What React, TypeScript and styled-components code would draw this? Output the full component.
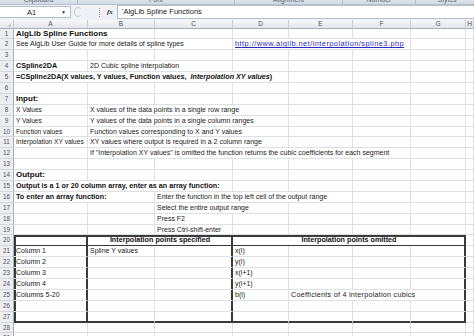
import React from 'react';
import styled, { createGlobalStyle, css } from 'styled-components';

const GlobalStyle = createGlobalStyle`
  html, body { margin: 0; padding: 0; background: #fff; }
  body { font-family: 'Liberation Sans', Arial, sans-serif; overflow: hidden; }
`;

const LETTERS = ['A', 'B', 'C', 'D', 'E', 'F', 'G', 'H'];
const DARK = '#3a3a3a';

type Kind = 'body' | 'label' | 'title' | 'bold' | 'head' | 'link' | 'wide';
type CellDef = { t?: React.ReactNode; s?: number; k?: Kind; a?: 'center'; e?: string };

const Window = styled.div`
  width: 474px;
  height: 336px;
  overflow: hidden;
  display: flex;
  flex-direction: column;
`;

const RibbonEdge = styled.div`
  height: 4px;
  display: flex;
  overflow: hidden;
  background: linear-gradient(#dde4ec, #d2d9e2);
  border-bottom: 1px solid #b7c2cf;
`;

const RibbonGroup = styled.div<{ $w: number }>`
  width: ${(p) => p.$w}px;
  flex: none;
  border-right: 1px solid #aebaca;
  font-size: 7px;
  color: #56606c;
  text-align: center;
  line-height: 7px;
  margin-top: -4px;
`;

const FormulaBar = styled.div`
  height: 15px;
  display: flex;
  align-items: center;
  background: #eef1f5;
`;

const NameBox = styled.div`
  width: 71px;
  height: 12px;
  flex: none;
  display: flex;
  align-items: center;
  background: #fff;
  border: 1px solid #b4bfcc;
  border-left: none;
  font-size: 7.5px;
  color: #222;
  padding-left: 27px;
  box-sizing: border-box;
`;

const NameArrow = styled.span`
  margin-left: auto;
  margin-right: 4px;
  font-size: 5px;
  color: #333;
`;

const FxArea = styled.div`
  width: 46px;
  flex: none;
  display: flex;
  align-items: center;
  height: 14px;
`;

const CancelMark = styled.span`
  margin-left: 3px;
  width: 6px;
  height: 8px;
  border: 1px solid #c9ced6;
  border-radius: 50%;
  border-right-color: transparent;
`;

const Dots = styled.span`
  margin-left: 17px;
  height: 9px;
  border-left: 1px dotted #9aa4b0;
`;

const FxLabel = styled.span`
  margin-left: 7px;
  font-family: 'Liberation Serif', serif;
  font-style: italic;
  font-weight: bold;
  font-size: 7px;
  color: #333;
`;

const FormulaInput = styled.div`
  flex: 1;
  height: 12px;
  background: #fff;
  border: 1px solid #b4bfcc;
  border-right: none;
  font-size: 7.5px;
  line-height: 12px;
  color: #222;
  padding-left: 4px;
`;

const Sheet = styled.div`
  display: grid;
  grid-template-columns: 14px 74px 67px 78px 56px 64px 58px 55px 1fr;
  grid-template-rows: 9px;
  grid-auto-rows: 10.9px;
  overflow: hidden;
`;

const HeaderCell = styled.div<{ $corner?: boolean }>`
  background: linear-gradient(#f7f8fa, #e2e5e9);
  border-right: 1px solid #c7ccd2;
  border-bottom: 1px solid #a9b0b9;
  font-size: 6.5px;
  line-height: 8px;
  color: #4a4f55;
  text-align: center;
  position: relative;
  ${(p) =>
    p.$corner &&
    css`
      &::after {
        content: '';
        position: absolute;
        right: 2px;
        bottom: 1px;
        border-left: 4px solid transparent;
        border-bottom: 4px solid #c3c8ce;
      }
    `}
`;

const RowHead = styled.div`
  background: #eceef1;
  border-right: 1px solid #a9b0b9;
  border-bottom: 1px solid #d3d7dc;
  font-size: 6.3px;
  line-height: 10px;
  color: #50555c;
  text-align: center;
`;

const edgeStyle = (e = '') => {
  const shadows: string[] = [];
  if (e.includes('t')) shadows.push(`inset 0 2px 0 ${DARK}`);
  if (e.includes('l')) shadows.push(`inset 2px 0 0 ${DARK}`);
  if (e.includes('r')) shadows.push(`inset -1px 0 0 ${DARK}`);
  if (e.includes('B')) shadows.push(`inset 0 -1px 0 ${DARK}`);
  return css`
    ${e.includes('r') && `border-right-color: ${DARK};`}
    ${(e.includes('b') || e.includes('B')) && `border-bottom-color: ${DARK};`}
    ${shadows.length > 0 && `box-shadow: ${shadows.join(', ')};`}
  `;
};

const kindStyle = {
  body: css`
    font-size: 7px;
    color: #222;
  `,
  label: css`
    font-size: 6.6px;
    color: #222;
  `,
  wide: css`
    font-size: 7.2px;
    letter-spacing: 0.25px;
    color: #222;
  `,
  title: css`
    font-size: 8px;
    font-weight: bold;
    color: #111;
  `,
  bold: css`
    font-size: 7.2px;
    font-weight: bold;
    color: #111;
  `,
  head: css`
    font-size: 8px;
    font-weight: bold;
    color: #111;
  `,
  link: css`
    font-size: 7.4px;
    letter-spacing: 0.45px;
    color: #2a2ac0;
    text-decoration: underline;
  `,
};

const Cell = styled.div<{ $span: number; $kind: Kind; $align?: string; $edge?: string }>`
  grid-column: span ${(p) => p.$span};
  border-right: 1px solid #dde0e4;
  border-bottom: 1px solid #dde0e4;
  white-space: nowrap;
  line-height: 10.5px;
  padding: 0 2px;
  overflow: visible;
  text-align: ${(p) => p.$align || 'left'};
  ${(p) => kindStyle[p.$kind]}
  ${(p) => edgeStyle(p.$edge)}
`;

const tableRow = (a = '', b = '', d = '', e = '', last = false): CellDef[] => {
  const B = last ? 'B' : '';
  const tail: CellDef[] = e
    ? [{ t: e, s: 3, k: 'wide', e: 'r' + B }]
    : [{ e: B }, { e: B }, { e: 'r' + B }];
  return [{ t: a, e: 'lr' + B }, { t: b, e: B }, { e: 'r' + B }, { t: d, e: B }, ...tail];
};

const rows: CellDef[][] = [
  [{ t: 'AlgLib Spline Functions', s: 2, k: 'title' }],
  [
    { t: 'See AlgLib User Guide for more details of spline types', s: 3 },
    { t: 'http://www.alglib.net/interpolation/spline3.php', s: 3, k: 'link' },
  ],
  [],
  [{ t: 'CSpline2DA', k: 'bold' }, { t: '2D Cubic spline interpolation', s: 2 }],
  [
    {
      t: (
        <>
          =CSpline2DA(X values, Y values, Function values,&nbsp; <i>Interpolation XY values</i>)
        </>
      ),
      s: 4,
      k: 'bold',
    },
  ],
  [],
  [{ t: 'Input:', k: 'head' }],
  [{ t: 'X Values', k: 'label' }, { t: 'X values of the data points in a single row range', s: 3 }],
  [{ t: 'Y Values', k: 'label' }, { t: 'Y values of the data points in a single column ranges', s: 3 }],
  [
    { t: 'Function values', k: 'label' },
    { t: 'Function values corresponding to X and Y values', s: 3 },
  ],
  [
    { t: 'Interpolation XY values', k: 'label' },
    { t: 'XY values where output is required in a 2 column range', s: 3 },
  ],
  [
    {},
    {
      t: 'If "Interpolation XY values" is omitted the function returns the cubic coefficients for each segment',
      s: 5,
    },
  ],
  [],
  [{ t: 'Output:', k: 'head' }],
  [{ t: 'Output is a 1 or 20 column array, enter as an array function:', s: 3, k: 'bold' }],
  [
    { t: 'To enter an array function:', s: 2, k: 'bold' },
    { t: 'Enter the function in the top left cell of the output range', s: 3 },
  ],
  [{}, {}, { t: 'Select the entire output range', s: 2 }],
  [{}, {}, { t: 'Press F2' }],
  [{}, {}, { t: 'Press Ctrl-shift-enter' }],
  [
    { e: 'tlrb' },
    { t: 'Interpolation points specified', s: 2, k: 'bold', a: 'center', e: 'trb' },
    { t: 'Interpolation points omitted', s: 4, k: 'bold', a: 'center', e: 'trb' },
  ],
  tableRow('Column 1', 'Spline Y values', 'x(i)'),
  tableRow('Column 2', '', 'y(i)'),
  tableRow('Column 3', '', 'x(i+1)'),
  tableRow('Column 4', '', 'y(i+1)'),
  tableRow('Columns 5-20', '', 'b(i)', 'Coefficients of 4 interpolation cubics'),
  tableRow(),
  tableRow('', '', '', '', true),
  [],
  [],
];

const fill = (cells: CellDef[]) => {
  const out = [...cells];
  let used = out.reduce((n, c) => n + (c.s || 1), 0);
  while (used < LETTERS.length) {
    out.push({});
    used += 1;
  }
  return out;
};

const ribbonGroups = [
  { w: 77, label: 'Clipboard' },
  { w: 156, label: 'Font' },
  { w: 107, label: 'Alignment' },
  { w: 72, label: 'Number' },
  { w: 62, label: 'Styles' },
];

export default function App() {
  return (
    <Window>
      <GlobalStyle />
      <RibbonEdge>
        {ribbonGroups.map((g) => (
          <RibbonGroup key={g.label} $w={g.w}>
            {g.label}
          </RibbonGroup>
        ))}
      </RibbonEdge>
      <FormulaBar>
        <NameBox>
          A1
          <NameArrow>▼</NameArrow>
        </NameBox>
        <FxArea>
          <CancelMark />
          <Dots />
          <FxLabel>fx</FxLabel>
        </FxArea>
        <FormulaInput>'AlgLib Spline Functions</FormulaInput>
      </FormulaBar>
      <Sheet>
        <HeaderCell $corner />
        {LETTERS.map((l) => (
          <HeaderCell key={l}>{l}</HeaderCell>
        ))}
        {rows.map((row, i) => (
          <React.Fragment key={i}>
            <RowHead>{i + 1}</RowHead>
            {fill(row).map((c, j) => (
              <Cell key={j} $span={c.s || 1} $kind={c.k || 'body'} $align={c.a} $edge={c.e}>
                {c.t}
              </Cell>
            ))}
          </React.Fragment>
        ))}
      </Sheet>
    </Window>
  );
}
